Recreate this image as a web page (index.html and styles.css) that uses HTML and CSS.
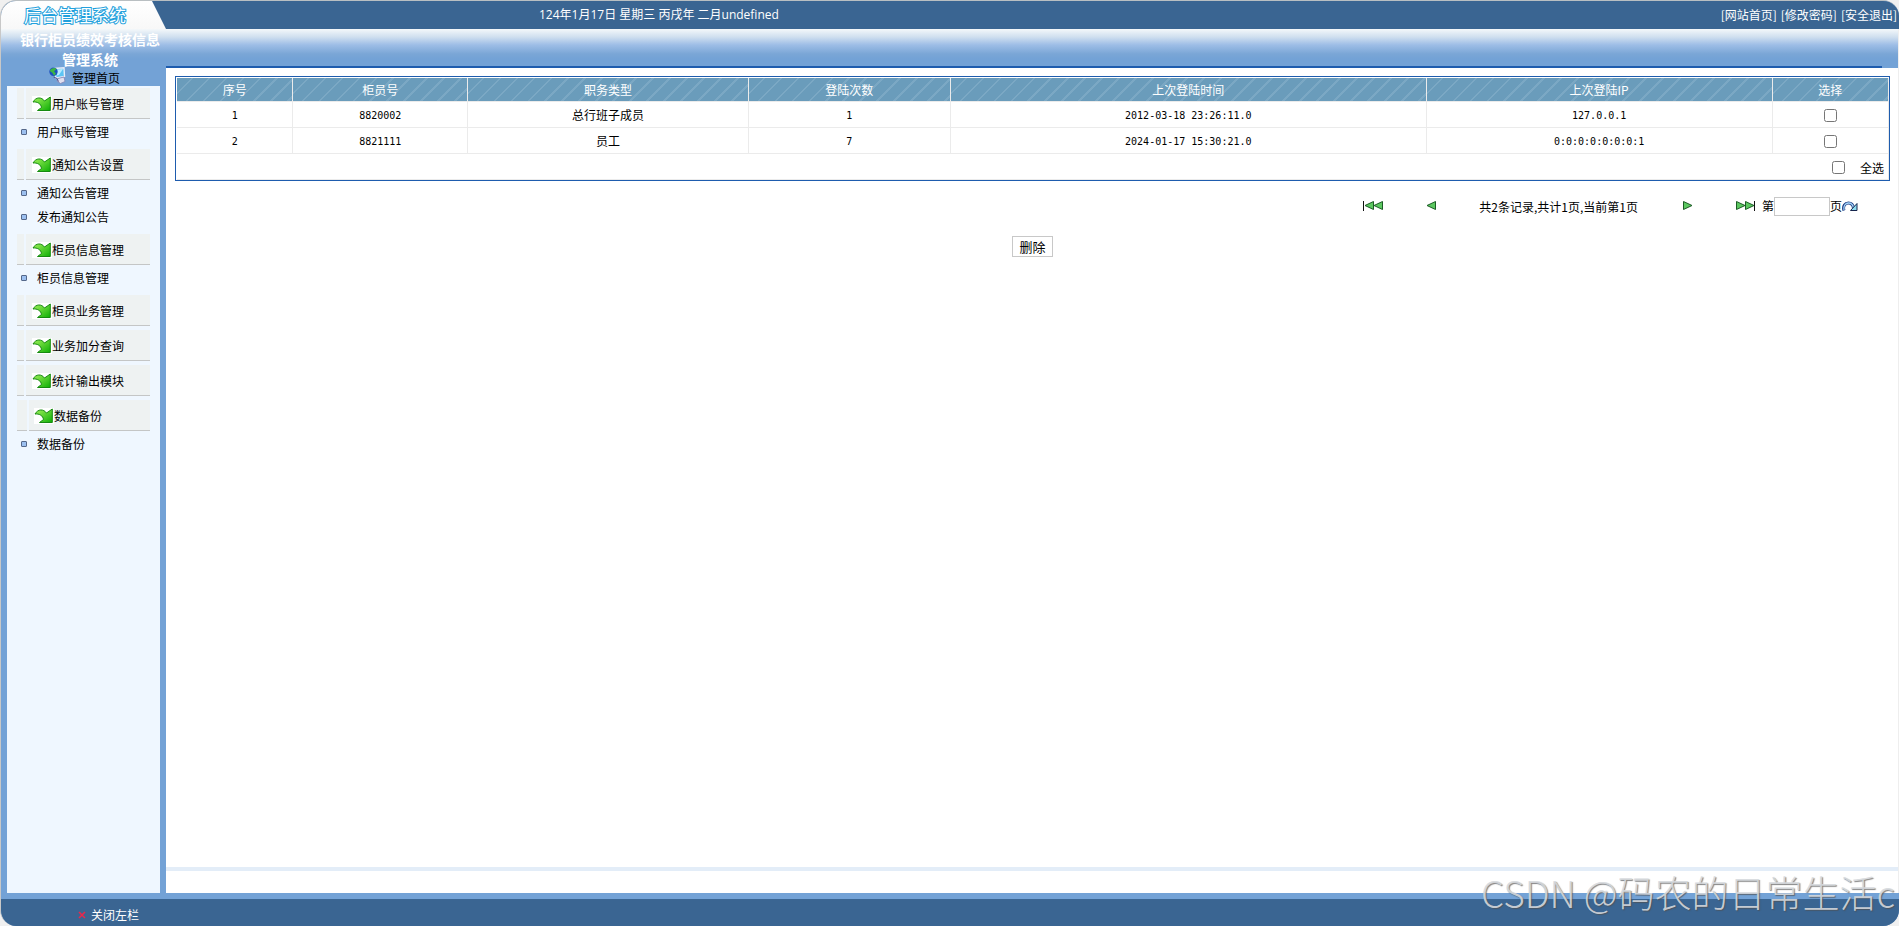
FILE: index.html
```html
<!DOCTYPE html>
<html lang="zh-CN">
<head>
    <meta charset="UTF-8">
    <meta name="viewport" content="width=device-width, initial-scale=1.0">
    <title>后台管理系统</title>
    <link rel="stylesheet" href="styles.css">
</head>
<body>
    <!-- 公用图标 -->
    <svg class="defs" width="0" height="0" aria-hidden="true">
        <linearGradient id="green" x1="0" y1="0" x2="1" y2="1">
            <stop offset="0" stop-color="#a4f45c"/>
            <stop offset="1" stop-color="#0eae06"/>
        </linearGradient>
        <symbol id="i-arrow" viewBox="0 0 20 16">
            <path d="M1 6C4 .8 9.500.8 12.500 5L18.300 1V14.500H5.500L9.500 11.500C9 7.500 5 5.500 1 6Z" fill="url(#green)" stroke="#168a10" stroke-width="1"/>
        </symbol>
        <symbol id="i-tri" viewBox="0 0 10 9">
            <path d="M.5.5V8.500L9 4.500Z" fill="#5cc860" stroke="#1c5c26" stroke-width="1"/>
        </symbol>
    </svg>

    <div class="page">
        <header class="top">
            <div class="logo"><span>后台管理系统</span></div>
            <div class="date">124年1月17日 星期三 丙戌年 二月undefined</div>
            <nav class="links">
                <a href="#">[网站首页]</a>
                <a href="#">[修改密码]</a>
                <a href="#">[安全退出]</a>
            </nav>
        </header>

        <div class="middle">
            <aside class="left">
                <div class="left_title">
                    <h1>银行柜员绩效考核信息管理系统</h1>
                    <a class="home" href="#">
                        <svg width="17" height="17" viewBox="0 0 17 17" aria-hidden="true">
                            <path d="M5 1.500L15 .8L15.500 9.500L7 11Z" fill="#5cc4f4" stroke="#e8ecf8" stroke-width="1.400"/>
                            <path d="M8 2.500L14 2L10 8L8 8.500Z" fill="#b8ecff"/>
                            <circle cx="4.500" cy="4.800" r="4.200" fill="#1c50c0"/>
                            <path d="M.8 4C2 .8 6 .4 7.500 2L5 4.500L7 6.500L5 8.800L3.500 6Z" fill="#3cb444"/>
                            <path d="M9 11.500L15 10L16 14.500L11.500 16.500L8 14Z" fill="#e0e0f0" stroke="#8484b4" stroke-width=".8"/>
                            <path d="M4.500 10L8 11.500L9.500 14.500" fill="none" stroke="#54548e"/>
                        </svg>
                        <span>管理首页</span>
                    </a>
                </div>
                <nav class="menu">
                    <section>
                        <h2><a href="#"><svg class="arrow"><use href="#i-arrow"/></svg>用户账号管理</a></h2>
                        <ul>
                            <li><a href="#">用户账号管理</a></li>
                        </ul>
                    </section>
                    <section>
                        <h2><a href="#"><svg class="arrow"><use href="#i-arrow"/></svg>通知公告设置</a></h2>
                        <ul>
                            <li><a href="#">通知公告管理</a></li>
                            <li><a href="#">发布通知公告</a></li>
                        </ul>
                    </section>
                    <section>
                        <h2><a href="#"><svg class="arrow"><use href="#i-arrow"/></svg>柜员信息管理</a></h2>
                        <ul>
                            <li><a href="#">柜员信息管理</a></li>
                        </ul>
                    </section>
                    <section>
                        <h2><a href="#"><svg class="arrow"><use href="#i-arrow"/></svg>柜员业务管理</a></h2>
                    </section>
                    <section>
                        <h2><a href="#"><svg class="arrow"><use href="#i-arrow"/></svg>业务加分查询</a></h2>
                    </section>
                    <section>
                        <h2><a href="#"><svg class="arrow"><use href="#i-arrow"/></svg>统计输出模块</a></h2>
                    </section>
                    <section>
                        <h2 class="short"><a href="#"><svg class="arrow"><use href="#i-arrow"/></svg>数据备份</a></h2>
                        <ul>
                            <li><a href="#">数据备份</a></li>
                        </ul>
                    </section>
                </nav>
            </aside>

            <main class="right">
                <div class="band"></div>
                <form class="content" onsubmit="return false">
                    <table class="list">
                        <colgroup>
                            <col class="c_no"><col class="c_id"><col class="c_type"><col class="c_count"><col class="c_time"><col class="c_ip"><col class="c_sel">
                        </colgroup>
                        <thead>
                            <tr>
                                <th>序号</th>
                                <th>柜员号</th>
                                <th>职务类型</th>
                                <th>登陆次数</th>
                                <th>上次登陆时间</th>
                                <th>上次登陆IP</th>
                                <th>选择</th>
                            </tr>
                        </thead>
                        <tbody>
                            <tr>
                                <td class="num">1</td>
                                <td class="num">8820002</td>
                                <td>总行班子成员</td>
                                <td class="num">1</td>
                                <td class="num">2012-03-18 23:26:11.0</td>
                                <td class="num">127.0.0.1</td>
                                <td><input type="checkbox" aria-label="选择 8820002"></td>
                            </tr>
                            <tr>
                                <td class="num">2</td>
                                <td class="num">8821111</td>
                                <td>员工</td>
                                <td class="num">7</td>
                                <td class="num">2024-01-17 15:30:21.0</td>
                                <td class="num">0:0:0:0:0:0:0:1</td>
                                <td><input type="checkbox" aria-label="选择 8821111"></td>
                            </tr>
                            <tr>
                                <td class="all" colspan="7">
                                    <label><input type="checkbox"><span>全选</span></label>
                                </td>
                            </tr>
                        </tbody>
                    </table>

                    <div class="pager">
                        <button type="button" aria-label="首页">
                            <svg width="20" height="10" viewBox="0 0 20 10"><path d="M.5 0V10" stroke="#111"/><use href="#i-tri" width="10" height="9" transform="translate(11 0) scale(-1 1)"/><use href="#i-tri" width="10" height="9" transform="translate(20 0) scale(-1 1)"/></svg>
                        </button>
                        <button type="button" aria-label="上一页" class="prev">
                            <svg width="10" height="10" viewBox="0 0 10 10"><use href="#i-tri" width="10" height="9" transform="translate(10 0) scale(-1 1)"/></svg>
                        </button>
                        <span class="info">共2条记录,共计1页,当前第1页</span>
                        <button type="button" aria-label="下一页" class="next">
                            <svg width="10" height="10" viewBox="0 0 10 10"><use href="#i-tri" width="10" height="9"/></svg>
                        </button>
                        <button type="button" aria-label="末页">
                            <svg width="20" height="10" viewBox="0 0 20 10"><use href="#i-tri" width="10" height="9"/><use href="#i-tri" x="9" width="10" height="9"/><path d="M18.500 0V10" stroke="#111"/></svg>
                        </button>
                        <div class="jump">
                            <label for="page">第</label><input type="text" id="page"><span>页</span>
                            <button type="button" aria-label="跳转">
                                <svg width="16" height="11" viewBox="0 0 16 11">
                                    <path d="M2 9.500C.5 5 3 2 6.500 2C9.500 2 11 4 11.500 7" fill="none" stroke="#1c3c84" stroke-width="3"/>
                                    <path d="M2 9C1 5 3.500 2 6.500 2C9.500 2 11 4 11.500 7" fill="none" stroke="#a4d4f8" stroke-width="1.300"/>
                                    <path d="M15 2.500V9.500H8.500Z" fill="#8cdcf0" stroke="#16244c"/>
                                </svg>
                            </button>
                        </div>
                    </div>

                    <button type="submit" class="delete">删除</button>
                </form>
                <div class="bottom_line"></div>
            </main>
        </div>

        <footer class="bottom">
            <a href="#">
                <svg width="8" height="8" viewBox="0 0 8 8" aria-hidden="true"><path d="M1 1L7 7M7 1L1 7" stroke="#e8284c" stroke-width="1.600"/></svg>
                关闭左栏
            </a>
        </footer>
    </div>
    <div class="watermark">CSDN @码农的日常生活c</div>
</body>
</html>
```

FILE: styles.css
```css
*,
*::before {
    box-sizing: border-box;
}
body {
    margin: 0;
    background: #f0f0f0;
    color: #000;
    font: 12px/16px "Noto Sans CJK SC", sans-serif;
    overflow: hidden;
}
a {
    color: inherit;
    text-decoration: none;
}
button {
    padding: 0;
    border: 0;
    background: none;
    font: inherit;
}
svg {
    display: block;
    flex: none;
}
.defs {
    position: absolute;
}
.page {
    display: flex;
    flex-direction: column;
    min-height: 100vh;
    border-top: 1px solid #b9bfc2;
    border-left: 1px solid #c8c8c8;
    border-radius: 16px;
    overflow: hidden;
    background: #73a2d6;
}

/* 顶部 */
.top {
    display: flex;
    align-items: center;
    height: 28px;
    background: #3a6592;
    color: #fff;
}
.logo {
    width: 165px;
    height: 28px;
    padding-left: 23px;
    background: linear-gradient(#fff, #f8f8f8);
    clip-path: polygon(0 0, 151px 0, 165px 100%, 0 100%);
    color: #fff;
    font-size: 17px;
    line-height: 28px;
}
.logo span {
    -webkit-text-stroke: 2px #22a0dc;
    paint-order: stroke fill;
}
.date {
    flex: 1;
    padding-left: 373px;
    font-family: "Open Sans", "Noto Sans CJK SC", sans-serif;
}
.links {
    display: flex;
    gap: 4px;
    padding-right: 2px;
}

/* 左栏 */
.middle {
    flex: 1;
    display: flex;
    padding-bottom: 6px;
    background: linear-gradient(#f4f8fa, #cfdfef 8px, #9dbde6 16px, #7aa6d6 25px, #73a2d6 30px);
}
.left {
    display: flex;
    flex-direction: column;
    width: 165px;
    padding: 0 6px;
}
.left_title {
    height: 57px;
    text-align: center;
}
h1 {
    margin: 0;
    padding-left: 13px;
    color: #fff;
    font-size: 14px;
    line-height: 20px;
    font-weight: bold;
}
.home {
    display: flex;
    gap: 6px;
    justify-content: center;
    padding-left: 2px;
}
.home span {
    padding-top: 1px;
}
.home svg {
    margin-top: -2px;
}
.menu {
    flex: 1;
    padding: 2px 10px;
    background: #eff7ff;
}
.menu section {
    margin-bottom: 4px;
}
.menu h2 {
    display: flex;
    gap: 2px;
    margin: 0;
    font-size: 12px;
    font-weight: normal;
}
.menu h2::before {
    content: "";
    width: 7px;
    background: #eef2f2;
    border-bottom: 1px solid #c4c6c6;
}
.menu h2 a {
    flex: 1;
    display: flex;
    align-items: center;
    height: 31px;
    padding: 1px 0 0 6px;
    background: #eef2f2;
    border-bottom: 1px solid #c4c6c6;
}
.menu .short::before {
    width: 10px;
}
.menu .short a {
    padding-left: 5px;
}
.arrow {
    width: 20px;
    height: 16px;
    background: #fff;
}
.menu ul {
    margin: 0;
    padding: 1px 0;
    list-style: none;
}
.menu li {
    display: flex;
    align-items: center;
    gap: 10px;
    height: 24px;
    padding-left: 4px;
}
.menu li::before {
    content: "";
    width: 6px;
    height: 6px;
    border: 1px solid #55688a;
    border-radius: 1px;
    background: #9cc0f0;
}

/* 右侧 */
.right {
    flex: 1;
    display: flex;
    flex-direction: column;
    border-right: 1px solid #eee;
}
.band {
    height: 39px;
    margin-right: 16px;
    border-bottom: 2px solid #1e5cae;
}
.content {
    flex: 1;
    padding: 8px 8px 0 9px;
    background: #fff;
}
.list {
    width: 100%;
    padding: 1px 0 0 1px;
    border: 1px solid #1e5cae;
    border-collapse: separate;
    border-spacing: 0;
    table-layout: fixed;
    text-align: center;
}
.c_no, .c_sel { width: 6.8%; }
.c_id { width: 10.2%; }
.c_type { width: 16.4%; }
.c_count { width: 11.8%; }
.c_time { width: 27.8%; }
.c_ip { width: 20.2%; }
.list th,
.list td {
    height: 26px;
    padding: 1px 0 0;
    border-right: 1px solid #ebebeb;
    border-bottom: 1px solid #ebebeb;
}
.list th {
    height: 24px;
    background: repeating-linear-gradient(135deg, #6a9cbb 0 10px, #7ba8c4 10px 12px);
    color: #fff;
    font-weight: normal;
}
.list input {
    display: block;
    width: 13px;
    height: 13px;
    margin: 0 auto;
}
.list .num {
    padding-top: 2px;
    font-family: "DejaVu Sans Mono", monospace;
    font-size: 10px;
}
.all label {
    display: flex;
    justify-content: flex-end;
    align-items: center;
    gap: 15px;
    padding-right: 4px;
}
.all span {
    padding-top: 2px;
}
.list .all input {
    margin: 0;
}
.pager {
    display: flex;
    align-items: center;
    justify-content: flex-end;
    height: 20px;
    margin: 15px 32px 20px 0;
}
.prev {
    margin: 0 43px;
}
.next {
    margin: 0 43px;
}
.info {
    padding: 2px 2px 0 0;
}
.jump {
    display: flex;
    align-items: center;
    margin-left: 6px;
}
.jump input {
    width: 56px;
    height: 19px;
    border: 1px solid #c8c8c8;
}
.delete {
    display: block;
    width: 41px;
    height: 21px;
    margin: 0 auto;
    border: 1px solid #c8c8c8;
    font-size: 13px;
}
.bottom_line {
    height: 26px;
    border-top: 4px solid #e3edf8;
    background: #fff;
}

/* 底部 */
.bottom {
    height: 27px;
    padding: 7px 0 0 77px;
    background: #3a6592;
    color: #fff;
}
.bottom a {
    display: inline-flex;
    align-items: center;
    gap: 5px;
}
.watermark {
    position: absolute;
    right: 4px;
    bottom: 8px;
    color: rgba(215, 218, 222, 0.9);
    font-size: 37px;
    line-height: 52px;
    font-weight: 300;
    text-shadow: 1px 1px 1px rgba(80, 80, 80, 0.7);
    pointer-events: none;
}
```
